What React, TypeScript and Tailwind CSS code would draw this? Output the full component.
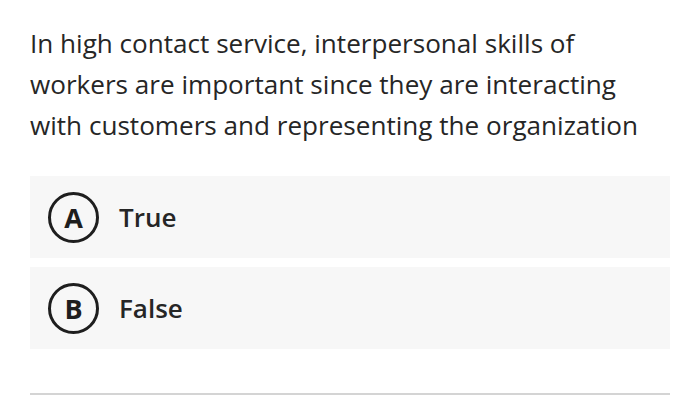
import React from 'react';

const options = [
  { letter: 'A', label: 'True' },
  { letter: 'B', label: 'False' },
];

export default function App() {
  return (
    <div className="w-[700px] h-[406px] bg-white px-[30px] pt-[23px] text-[#262626] font-['Open_Sans',sans-serif]">
      <p className="text-[26.1px] leading-[41px]">
        In high contact service, interpersonal skills of workers are important since they are interacting
        with customers and representing the organization
      </p>
      <div className="mt-[30px] flex flex-col gap-[9px]">
        {options.map((o) => (
          <div key={o.letter} className="flex h-[82px] items-center gap-[20px] bg-[#f7f7f7] pl-[18px]">
            <div className="flex h-[51px] w-[51px] shrink-0 items-center justify-center rounded-full border-[3px] border-[#1e1e1e]">
              <span className="text-[27px] font-bold leading-none text-[#1e1e1e]">{o.letter}</span>
            </div>
            <span className="text-[26px] font-semibold">{o.label}</span>
          </div>
        ))}
      </div>
      <div className="mt-[44px] h-[2px] w-[640px] bg-[#d4d4d4]" />
    </div>
  );
}
